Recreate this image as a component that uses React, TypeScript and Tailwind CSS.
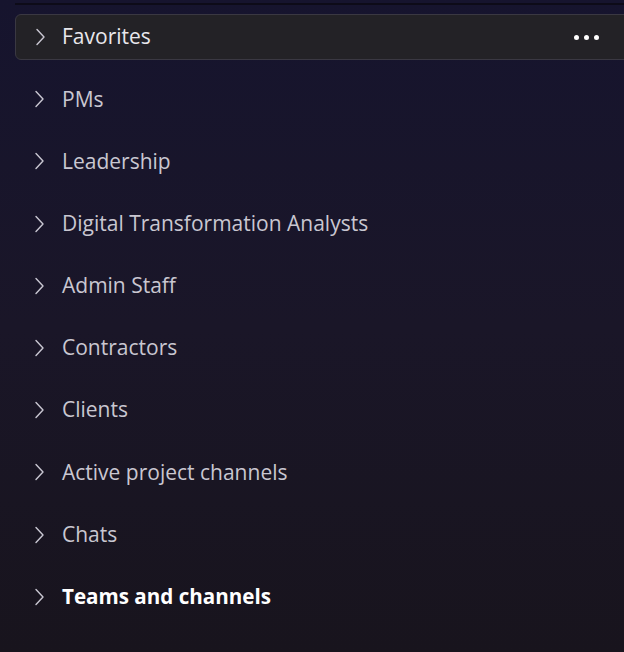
const groups = [
    "PMs",
    "Leadership",
    "Digital Transformation Analysts",
    "Admin Staff",
    "Contractors",
    "Clients",
    "Active project channels",
    "Chats",
];

const Chevron = () => (
    <svg width="11" height="18" viewBox="0 0 11 18" className="shrink-0">
        <path d="M2 1.5 L9 9 L2 16.5" fill="none" stroke="#c9c7d2" strokeWidth="1.4" strokeLinecap="round" strokeLinejoin="round" />
    </svg>
);

const Row = ({ label, bold }: { label: string; bold?: boolean }) => (
    <div className="h-[62.2px] flex items-center pl-[34px] pt-[2px]">
        <Chevron />
        <span
            className={
                bold
                    ? "ml-[17px] text-[20.6px] font-bold text-white"
                    : "ml-[17px] text-[21px] text-[#c9c7d1]"
            }
        >
            {label}
        </span>
    </div>
);

export default function App() {
    return (
        <div
            className="w-[624px] h-[652px] overflow-hidden bg-gradient-to-b from-[#16142e] via-[#1a1628] to-[#18141d]"
            style={{ fontFamily: "'Open Sans', 'Noto Sans', sans-serif" }}
        >
            <div className="h-[3px]" />
            <div className="ml-[15px] h-[2px] bg-[#0d0b18]" />
            <div className="h-[62.2px] flex items-center pt-[2px]">
                <div className="ml-[15px] flex-1 h-[46px] -mr-[8px] flex items-center pl-[19px] pr-[32px] rounded-md border border-[#3a3842] bg-[#232226]">
                    <Chevron />
                    <span className="ml-[16px] text-[21px] text-[#e8e7ec]">Favorites</span>
                    <div className="ml-auto flex gap-[5px]">
                        <span className="w-[5px] h-[5px] rounded-full bg-white" />
                        <span className="w-[5px] h-[5px] rounded-full bg-white" />
                        <span className="w-[5px] h-[5px] rounded-full bg-white" />
                    </div>
                </div>
            </div>
            {groups.map((g) => (
                <Row key={g} label={g} />
            ))}
            <Row label="Teams and channels" bold />
        </div>
    );
}
